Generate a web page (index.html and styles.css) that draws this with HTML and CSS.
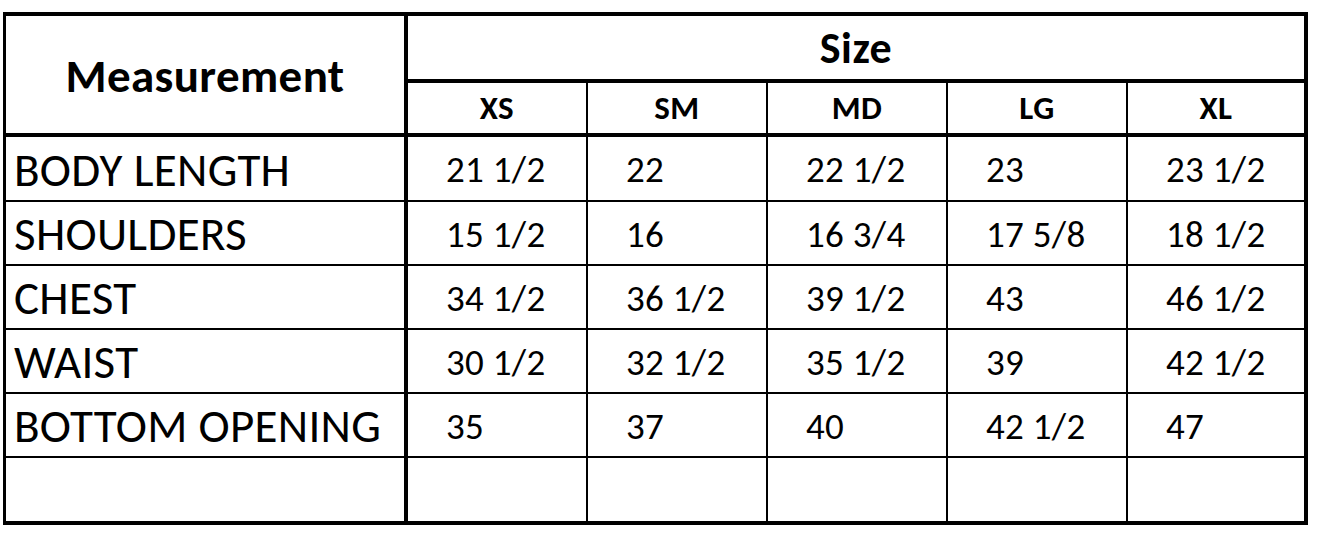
FILE: index.html
```html
<!DOCTYPE html>
<html>
<head>
<meta charset="utf-8">
<link rel="stylesheet" href="styles.css">
</head>
<body>
<div class="chart">
  <div class="cell head-main">Measurement</div>
  <div class="cell head-size">Size</div>
  <div class="cell head-sub">XS</div>
  <div class="cell head-sub">SM</div>
  <div class="cell head-sub">MD</div>
  <div class="cell head-sub">LG</div>
  <div class="cell head-sub last-col">XL</div>

  <div class="cell label">BODY LENGTH</div>
  <div class="cell val">21 1/2</div>
  <div class="cell val">22</div>
  <div class="cell val">22 1/2</div>
  <div class="cell val">23</div>
  <div class="cell val last-col">23 1/2</div>

  <div class="cell label">SHOULDERS</div>
  <div class="cell val">15 1/2</div>
  <div class="cell val">16</div>
  <div class="cell val">16 3/4</div>
  <div class="cell val">17 5/8</div>
  <div class="cell val last-col">18 1/2</div>

  <div class="cell label">CHEST</div>
  <div class="cell val">34 1/2</div>
  <div class="cell val">36 1/2</div>
  <div class="cell val">39 1/2</div>
  <div class="cell val">43</div>
  <div class="cell val last-col">46 1/2</div>

  <div class="cell label">WAIST</div>
  <div class="cell val">30 1/2</div>
  <div class="cell val">32 1/2</div>
  <div class="cell val">35 1/2</div>
  <div class="cell val">39</div>
  <div class="cell val last-col">42 1/2</div>

  <div class="cell label">BOTTOM OPENING</div>
  <div class="cell val">35</div>
  <div class="cell val">37</div>
  <div class="cell val">40</div>
  <div class="cell val">42 1/2</div>
  <div class="cell val last-col">47</div>

  <div class="cell label last-row"></div>
  <div class="cell val last-row"></div>
  <div class="cell val last-row"></div>
  <div class="cell val last-row"></div>
  <div class="cell val last-row"></div>
  <div class="cell val last-row last-col"></div>
</div>
</body>
</html>
```
FILE: styles.css
```css
html, body {
  margin: 0;
  padding: 0;
  background: #fff;
}

body {
  font-family: Carlito, Calibri, Lato, "Liberation Sans", sans-serif;
  color: #000;
}

.chart {
  display: grid;
  grid-template-columns: 402px 180px 180px 180px 180px 176px;
  grid-template-rows: 67px 54px 65px 64px 64px 64px 64px 63px;
  width: 1298px;
  margin: 12px 0 0 3px;
  border-style: solid;
  border-color: #000;
  border-width: 4px 4px 4px 3px;
}

.cell {
  box-sizing: border-box;
  display: flex;
  align-items: center;
  border-color: #000;
  border-style: solid;
  border-width: 0 2px 2px 0;
  white-space: nowrap;
}

.head-main {
  grid-row: 1 / 3;
  border-width: 0 4px 4px 0;
  justify-content: center;
  font-weight: 700;
  font-size: 47px;
  letter-spacing: 0.4px;
  padding-top: 2px;
}

.head-size {
  grid-column: 2 / 7;
  border-width: 0 0 4px 0;
  justify-content: center;
  font-weight: 700;
  font-size: 44px;
  letter-spacing: 0.5px;
}

.head-sub {
  border-width: 0 2px 4px 0;
  justify-content: center;
  font-weight: 700;
  font-size: 33px;
  letter-spacing: 0.5px;
}

.label {
  border-width: 0 4px 2px 0;
  padding-left: 8px;
  font-size: 47px;
  letter-spacing: 0.3px;
  padding-top: 2px;
}

.val {
  padding-left: 38px;
  font-size: 37px;
  letter-spacing: 0.3px;
  padding-top: 2px;
}

.cell.last-col {
  border-right-width: 0;
}

.cell.last-row {
  border-bottom-width: 0;
}
```
